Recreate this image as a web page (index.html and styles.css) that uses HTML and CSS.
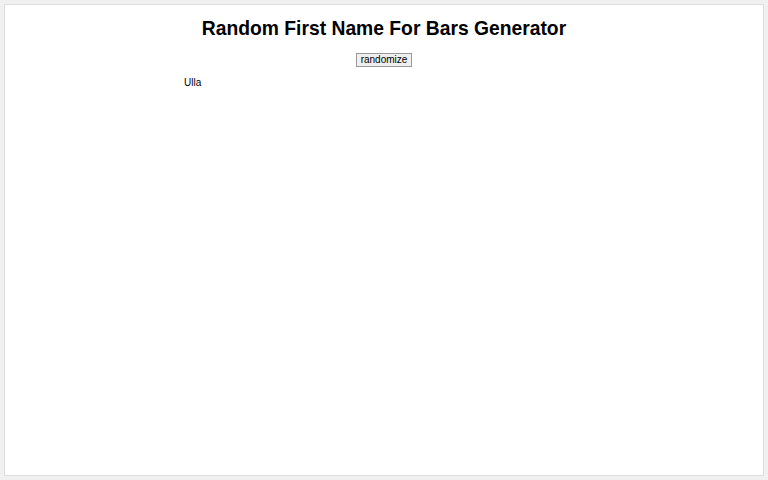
FILE: index.html
```html
<!DOCTYPE html>
<html>
<head>
<meta charset="utf-8">
<link rel="stylesheet" href="styles.css">
</head>
<body>
<div class="panel">
  <h1 class="title">Random First Name For Bars Generator</h1>
  <div class="controls"><button class="btn">randomize</button></div>
  <div class="result">Ulla</div>
</div>
</body>
</html>
```
FILE: styles.css
```css
html, body { margin: 0; padding: 0; }
body {
  background: #f0f0f0;
  padding: 4px 4px 4px 4px;
  height: 480px;
  box-sizing: border-box;
  font-family: "Liberation Sans", Arial, sans-serif;
}
.panel {
  background: #fff;
  border: 1px solid #dcdcdc;
  height: 100%;
  box-sizing: border-box;
}
.title {
  margin: 12px 0 0 0;
  font-size: 19.3px;
  font-weight: bold;
  text-align: center;
  line-height: 24px;
  color: #000;
}
.controls {
  text-align: center;
  margin-top: 8px;
}
.btn {
  font-family: "Liberation Sans", Arial, sans-serif;
  font-size: 10px;
  padding: 1px 4px;
  border: 1px solid #999;
  background: #efefef;
  border-radius: 0;
  line-height: 10px;
  color: #000;
}
.result {
  width: 400px;
  margin: 10px auto 0;
  font-size: 10px;
  line-height: 12px;
  color: #000;
}
```
